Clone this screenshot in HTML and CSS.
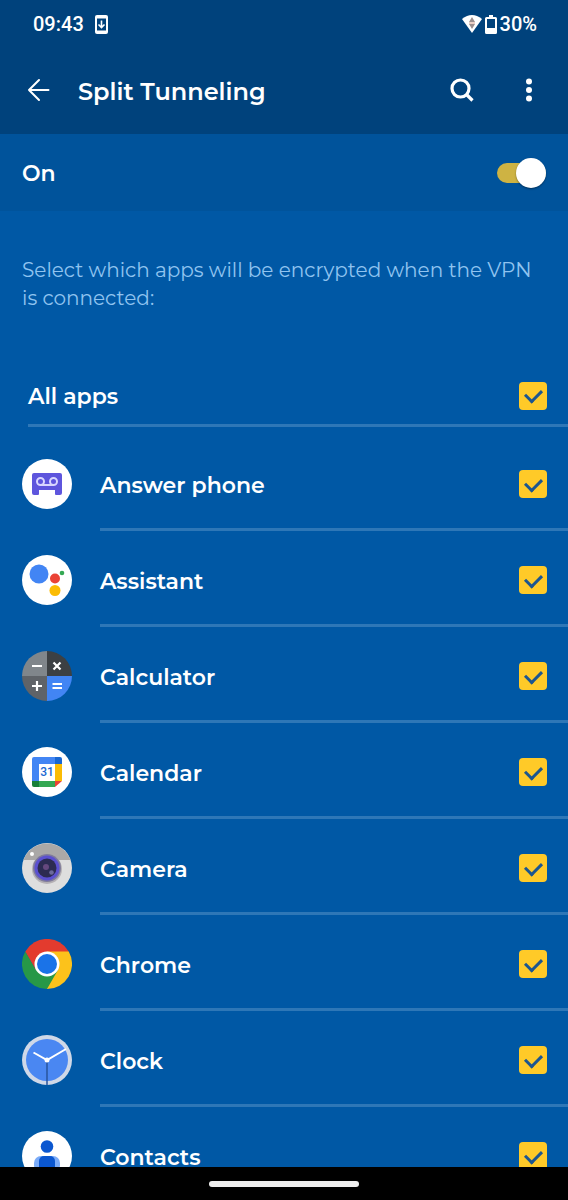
FILE: index.html
```html
<!DOCTYPE html>
<html lang="en">
<head>
    <meta charset="UTF-8">
    <meta name="viewport" content="width=device-width, initial-scale=1.0">
    <title>Split Tunneling</title>
    <link rel="stylesheet" href="styles.css">
</head>
<body>

<header class="header">
    <div class="status-bar">
        <span class="clock">09:43</span>
        <svg class="status-update" width="13" height="19" viewBox="0 0 13 19">
            <rect width="13" height="19" rx="2" fill="#fff"/>
            <rect x="2" y="3.500" width="9" height="12" fill="#00427c"/>
            <path d="M6.500 5.500v7M3.500 9.500l3 3 3-3" fill="none" stroke="#fff" stroke-width="1.600"/>
        </svg>
        <div class="status-right">
            <svg width="20" height="18" viewBox="0 0 20 18">
                <path d="M0 4Q10-4 20 4L10 18z" fill="#fff"/>
                <path d="M10 2l3 5H7zM10 14l-3-5h6z" fill="#9b8f8f"/>
                <path d="M7 8h6" stroke="#d9a08c" stroke-width="1"/>
            </svg>
            <svg width="12" height="19" viewBox="0 0 12 19">
                <path d="M4 0h4v2h2.500Q12 2 12 3.500v14Q12 19 10.500 19h-9Q0 19 0 17.500v-14Q0 2 1.500 2H4z" fill="#fff"/>
                <rect x="2" y="4" width="8" height="9" fill="#00427c"/>
            </svg>
            <span class="battery">30%</span>
        </div>
    </div>
    <div class="toolbar">
        <button class="icon-button" aria-label="Back">
            <svg width="24" height="24" viewBox="0 0 24 24" fill="none" stroke="#fff" stroke-width="2" stroke-linecap="round" stroke-linejoin="round">
                <path d="M22.500 12H3M13 2L3 12l10 10"/>
            </svg>
        </button>
        <h1>Split Tunneling</h1>
        <button class="icon-button" aria-label="Search">
            <svg width="24" height="24" viewBox="0 0 24 24" fill="none" stroke="#fff" stroke-width="3.200">
                <circle cx="10.500" cy="10.500" r="8.500"/>
                <path d="M16.500 16.500l6 6"/>
            </svg>
        </button>
        <button class="icon-button menu-button" aria-label="More options">
            <svg width="6" height="24" viewBox="0 0 6 24" fill="#fff">
                <circle cx="3" cy="3.500" r="3"/>
                <circle cx="3" cy="12" r="3"/>
                <circle cx="3" cy="20.500" r="3"/>
            </svg>
        </button>
    </div>
</header>

<div class="switch-row">
    <label for="tunneling">On</label>
    <input type="checkbox" class="switch" id="tunneling" role="switch" checked>
</div>

<main class="content">
    <p class="description">Select which apps will be encrypted when the VPN is connected:</p>

    <div class="all-apps">
        <label for="all-apps">All apps</label>
        <input type="checkbox" class="check" id="all-apps" checked>
    </div>

    <ul class="app-list">
        <li class="app">
            <svg class="app-icon" viewBox="0 0 50 50">
                <circle cx="25" cy="25" r="25" fill="#fff"/>
                <path d="M12 14h26q2 0 2 2v18q0 2-2 2h-4q-1 0-1-1v-4H17v4q0 1-1 1h-4q-2 0-2-2V16q0-2 2-2z" fill="#5e55dd"/>
                <g fill="#5e55dd" stroke="#d9d6ff" stroke-width="2">
                    <path d="M18 26h14"/>
                    <circle cx="18.500" cy="22.500" r="3.500"/>
                    <circle cx="31.500" cy="22.500" r="3.500"/>
                </g>
            </svg>
            <div class="app-body">
                <label for="answer-phone">Answer phone</label>
                <input type="checkbox" class="check" id="answer-phone" checked>
            </div>
        </li>
        <li class="app">
            <svg class="app-icon" viewBox="0 0 50 50">
                <circle cx="25" cy="25" r="25" fill="#fff"/>
                <circle cx="17" cy="19" r="9.500" fill="#4285f4"/>
                <circle cx="33" cy="23.500" r="5" fill="#ea4335"/>
                <circle cx="33" cy="35.500" r="5.500" fill="#fbbc04"/>
                <circle cx="40" cy="18" r="2.300" fill="#34a853"/>
            </svg>
            <div class="app-body">
                <label for="assistant">Assistant</label>
                <input type="checkbox" class="check" id="assistant" checked>
            </div>
        </li>
        <li class="app">
            <svg class="app-icon" viewBox="0 0 50 50">
                <path d="M25 25H0A25 25 0 0 1 25 0z" fill="#80868b"/>
                <path d="M25 25V0a25 25 0 0 1 25 25z" fill="#3c4043"/>
                <path d="M25 25v25A25 25 0 0 1 0 25z" fill="#5f6368"/>
                <path d="M25 25h25a25 25 0 0 1-25 25z" fill="#4285f4"/>
                <path d="M10 15h10M31.500 11.500l7 7m0-7l-7 7M10 35h10M15 30v10M30.500 33h9.500M30.500 37h9.500" stroke="#fff" stroke-width="2.200"/>
            </svg>
            <div class="app-body">
                <label for="calculator">Calculator</label>
                <input type="checkbox" class="check" id="calculator" checked>
            </div>
        </li>
        <li class="app">
            <svg class="app-icon" viewBox="0 0 50 50">
                <circle cx="25" cy="25" r="25" fill="#fff"/>
                <path d="M12 10h21v7H17v17h-7V12q0-2 2-2z" fill="#4285f4"/>
                <path d="M33 10h5q2 0 2 2v5h-7z" fill="#1967d2"/>
                <path d="M33 17h7v17h-7z" fill="#fbbc04"/>
                <path d="M10 34h7v6h-5q-2 0-2-2z" fill="#188038"/>
                <path d="M17 34h16v6H17z" fill="#34a853"/>
                <path d="M33 34h7l-7 6z" fill="#ea4335"/>
                <text class="calendar-day" x="25" y="29" text-anchor="middle">31</text>
            </svg>
            <div class="app-body">
                <label for="calendar">Calendar</label>
                <input type="checkbox" class="check" id="calendar" checked>
            </div>
        </li>
        <li class="app">
            <svg class="app-icon" viewBox="0 0 50 50">
                <circle cx="25" cy="25" r="25" fill="#dedede"/>
                <path d="M1.500 17A25 25 0 0 1 48.500 17z" fill="#aaa8a7"/>
                <circle cx="25" cy="26" r="15" fill="#b5b1b5"/>
                <circle cx="25" cy="25" r="14" fill="#7f7b9b"/>
                <circle cx="25" cy="25" r="12.500" fill="#5b50d0"/>
                <circle cx="25" cy="25" r="9.500" fill="#2c2b52"/>
                <circle cx="24" cy="24" r="3" fill="#65487e"/>
                <circle cx="29.500" cy="29.500" r="2.300" fill="#6c6a9c"/>
                <circle cx="10" cy="11" r="2" fill="#fff"/>
            </svg>
            <div class="app-body">
                <label for="camera">Camera</label>
                <input type="checkbox" class="check" id="camera" checked>
            </div>
        </li>
        <li class="app">
            <svg class="app-icon" viewBox="0 0 50 50">
                <path d="M3.300 12.500A25 25 0 0 1 46.700 12.500L25 25z" fill="#e33b2e"/>
                <path d="M46.700 12.500A25 25 0 0 1 25 50L25 25V12.500z" fill="#fcc21b"/>
                <path d="M3.300 12.500A25 25 0 0 0 25 50L35.800 31.200 25 25 14.200 31.200z" fill="#279847"/>
                <path d="M3.300 12.500h43.400H25L14.200 31.200z" fill="#e33b2e"/>
                <circle cx="25" cy="25" r="12.500" fill="#fff"/>
                <circle cx="25" cy="25" r="10" fill="#1a73e8"/>
            </svg>
            <div class="app-body">
                <label for="chrome">Chrome</label>
                <input type="checkbox" class="check" id="chrome" checked>
            </div>
        </li>
        <li class="app">
            <svg class="app-icon" viewBox="0 0 50 50">
                <circle cx="25" cy="25" r="25" fill="#cfd8e8"/>
                <circle cx="25" cy="25" r="21" fill="#4a87f2"/>
                <path d="M25 25v25" stroke="#28549c" stroke-width="1.500"/>
                <path d="M11.500 17.500L25 25l19-11" fill="none" stroke="#fff" stroke-width="2"/>
                <circle cx="25" cy="25" r="2.500" fill="#fff"/>
            </svg>
            <div class="app-body">
                <label for="clock">Clock</label>
                <input type="checkbox" class="check" id="clock" checked>
            </div>
        </li>
        <li class="app">
            <svg class="app-icon" viewBox="0 0 50 50">
                <circle cx="25" cy="25" r="25" fill="#fff"/>
                <circle cx="25" cy="15.500" r="6.300" fill="#0b57d0"/>
                <rect x="12" y="25" width="26" height="16" rx="7" fill="#7cacf8"/>
                <rect x="17" y="25" width="16" height="20" rx="5" fill="#0b57d0"/>
            </svg>
            <div class="app-body">
                <label for="contacts">Contacts</label>
                <input type="checkbox" class="check" id="contacts" checked>
            </div>
        </li>
    </ul>
</main>

<footer class="nav-bar">
    <div class="nav-handle"></div>
</footer>

</body>
</html>
```

FILE: styles.css
```css
* {
    box-sizing: border-box;
}
body {
    font-family: Montserrat, Inter, sans-serif;
    margin: 0;
    height: 100vh;
    display: flex;
    flex-direction: column;
    background-color: #0058a5;
    color: white;
}
.header {
    background-color: #00427c;
}

/* Status bar */
.status-bar {
    display: flex;
    align-items: center;
    height: 46px;
    padding: 2px 31px 0 33px;
    font-family: Roboto, sans-serif;
    font-size: 20px;
    font-weight: 500;
}
.status-update {
    margin-left: 11px;
}
.status-right {
    display: flex;
    align-items: center;
    gap: 3px;
    margin-left: auto;
}

/* Toolbar */
.toolbar {
    display: flex;
    align-items: center;
    height: 88px;
    padding: 0 36px 0 26px;
}
.toolbar h1 {
    flex-grow: 1;
    margin: 0 0 0 28px;
    padding-top: 2px;
    font-size: 24px;
    font-weight: 600;
}
.icon-button {
    display: flex;
    background: none;
    border: none;
    padding: 0;
    cursor: pointer;
}
.menu-button {
    margin-left: 52px;
}

.switch-row {
    display: flex;
    align-items: center;
    justify-content: space-between;
    height: 77px;
    flex-shrink: 0;
    padding: 0 22px;
    background-color: #00539b;
    font-size: 22px;
    font-weight: 600;
}
.switch {
    appearance: none;
    display: flex;
    align-items: center;
    justify-content: flex-end;
    width: 49px;
    height: 20px;
    margin: 0;
    border-radius: 10px;
    background-color: #ceb343;
    cursor: pointer;
}
.switch::before {
    content: "";
    width: 30px;
    height: 30px;
    flex-shrink: 0;
    border-radius: 50%;
    background-color: white;
    box-shadow: 0 1px 2px rgba(0, 0, 0, 0.4);
}
.switch:not(:checked) {
    justify-content: flex-start;
    background-color: #7f9dbb;
}

.content {
    flex: 1;
    min-height: 0;
    overflow: hidden;
}
.description {
    margin: 45px 22px 0;
    font-size: 20px;
    line-height: 28px;
    color: #90c4f0;
}

/* Application list */
.all-apps {
    display: flex;
    align-items: center;
    justify-content: space-between;
    height: 60px;
    margin: 55px 0 0 28px;
    padding-right: 21px;
    border-bottom: 3px solid #2e77b7;
    font-size: 22px;
    font-weight: 600;
}
.app-list {
    list-style: none;
    margin: 8px 0 0;
    padding: 0;
}
.app {
    display: flex;
    gap: 28px;
    padding-left: 22px;
    font-size: 22px;
    font-weight: 600;
}
.app-icon {
    width: 50px;
    height: 50px;
    margin-top: 24px;
    flex-shrink: 0;
}
.app-body {
    display: flex;
    align-items: center;
    justify-content: space-between;
    flex-grow: 1;
    height: 96px;
    padding: 5px 21px 0 0;
    border-bottom: 3px solid #2e77b7;
}
.all-apps label,
.app-body label,
.switch-row label {
    padding-top: 2px;
}
.calendar-day {
    font-family: Roboto, sans-serif;
    font-size: 12px;
    font-weight: 500;
    fill: #1967d2;
}
.check {
    appearance: none;
    display: grid;
    place-items: center;
    width: 28px;
    height: 28px;
    margin: 0;
    border-radius: 4px;
    background-color: #ffca28;
    cursor: pointer;
}
.check:checked::before {
    content: "";
    width: 8px;
    height: 13px;
    margin-bottom: 3px;
    border: solid #1c5690;
    border-width: 0 3px 3px 0;
    transform: rotate(45deg);
}

.nav-bar {
    display: flex;
    align-items: center;
    justify-content: center;
    height: 33px;
    flex-shrink: 0;
    background-color: black;
}
.nav-handle {
    width: 150px;
    height: 6px;
    border-radius: 3px;
    background-color: #eee;
}
```
